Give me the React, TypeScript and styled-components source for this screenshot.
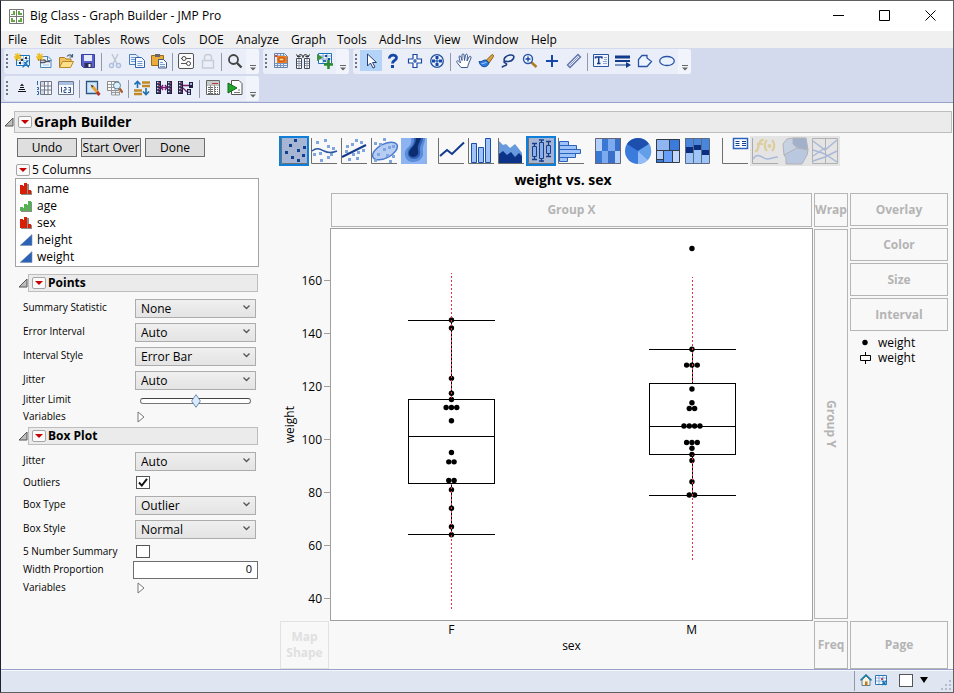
import React, { ReactNode } from "react";
import styled, { createGlobalStyle, css } from "styled-components";

const GlobalStyle = createGlobalStyle`
  *, *::before, *::after { box-sizing: border-box; }
  body {
    margin: 0;
    font-family: "Open Sans", "Noto Sans", sans-serif;
    font-size: 12px;
    line-height: 16px;
    color: #000;
  }
  button, input, select { font: inherit; color: inherit; margin: 0; }
  svg { display: block; }
`;

/* ---------- window frame ---------- */

const Window = styled.div`
  display: flex;
  flex-direction: column;
  min-height: 100vh;
  background: #f8f8f8;
  border: 1px solid #5f6063;
  border-left-color: #1f2230;
`;

const TitleBar = styled.header`
  display: flex;
  align-items: center;
  height: 30px;
  padding-left: 8px;
  gap: 6px;
  background: #fff;
`;

const WindowTitle = styled.h1`
  flex: 1;
  margin: 0;
  font-size: 12px;
  font-weight: 400;
`;

const CaptionButton = styled.button`
  display: grid;
  place-items: center;
  width: 46px;
  height: 30px;
  margin-left: -6px;
  padding: 0 0 2px;
  border: 0;
  background: transparent;
`;

const MenuBar = styled.nav`
  display: flex;
  height: 17px;
  background: #f0f0f0;
`;

const MenuItem = styled.button<{ $w: number }>`
  width: ${(p) => p.$w}px;
  padding: 0 0 0 7px;
  border: 0;
  background: transparent;
  text-align: left;
  white-space: nowrap;
  line-height: 17px;
`;

/* ---------- toolbars ---------- */

const ToolbarArea = styled.div`
  display: flex;
  flex-direction: column;
  gap: 2px;
  padding: 1px 3px 1px;
  background: #d3daed;
  border-bottom: 1px solid #98a1cb;
`;

const ToolbarRow = styled.div`
  display: flex;
  gap: 4px;
`;

const Toolbar = styled.div`
  display: flex;
  align-items: center;
  height: 25px;
  border-radius: 3px;
  background: #e9eef8;
  overflow: hidden;
`;

const Grip = styled.span`
  width: 7px;
  height: 15px;
  margin-bottom: 2px;
  background: radial-gradient(circle, #6d7482 1px, transparent 1px) 1px 0 / 4px 4px repeat-y;
`;

const Divider = styled.span`
  width: 1px;
  height: 18px;
  margin: 0 2px;
  background: #9498ac;
`;

const ToolButton = styled.button<{ $on?: boolean }>`
  display: grid;
  place-items: center;
  width: 22px;
  height: 21px;
  margin-bottom: 2px;
  padding: 0;
  border: 0;
  background: ${(p) => (p.$on ? "#b3d4f8" : "transparent")};
`;

const Overflow = styled.button`
  display: flex;
  align-items: flex-end;
  justify-content: center;
  width: 13px;
  height: 25px;
  padding: 0 0 3px;
  border: 0;
  background: #f1f5fb;
`;

/* ---------- outline headings ---------- */

const OutlineRow = styled.div<{ $main?: boolean }>`
  display: flex;
  align-items: center;
  ${(p) =>
    p.$main
      ? css`margin: 8px 1px 0 2px;`
      : css`margin: 0 1px 0 2px;`}
`;

const Disclosure = styled.button`
  display: grid;
  place-items: center;
  width: 11px;
  height: 14px;
  padding: 0;
  border: 0;
  background: transparent;
`;

const OutlineBar = styled.div<{ $main?: boolean }>`
  display: flex;
  flex: 1;
  align-items: center;
  gap: 2px;
  height: ${(p) => (p.$main ? 22 : 18)}px;
  padding-left: 3px;
  border: 1px solid #bdbdbd;
  background: #ebebeb;
`;

const HotSpotButton = styled.button`
  display: grid;
  place-items: center;
  width: 14px;
  height: 12px;
  padding: 0;
  border: 1px solid #a5a5a5;
  border-radius: 2px;
  background: #fafafa;
`;

const MainHeading = styled.h2`
  margin: 0;
  font-size: 14px;
  line-height: 18px;
  font-weight: 700;
`;

const SubHeading = styled.h3`
  margin: 0;
  font-size: 12px;
  line-height: 16px;
  font-weight: 700;
`;

/* ---------- left control panel ---------- */

const Workspace = styled.main`
  display: flex;
  flex: 1;
  align-items: flex-start;
`;

const ControlPanel = styled.aside`
  flex: none;
  width: 258px;
  padding: 5px 0 0 14px;
`;

const ButtonRow = styled.div`
  display: flex;
  gap: 4px;
  padding-left: 2px;
`;

const PushButton = styled.button`
  width: 60px;
  height: 19px;
  padding: 0;
  border: 1px solid #6e6e6e;
  background: #dfdfdf;
  line-height: 16px;
  white-space: nowrap;
`;

const ColumnsCaption = styled.div`
  display: flex;
  align-items: center;
  gap: 2px;
  height: 21px;
  padding: 4px 0 0 1px;
`;

const ColumnList = styled.ul`
  width: 244px;
  height: 89px;
  margin: 0 0 7px;
  padding: 1px 4px;
  border: 1px solid #a3a3a3;
  background: #fff;
  list-style: none;
`;

const ColumnItem = styled.li`
  display: flex;
  align-items: center;
  gap: 4px;
  height: 17px;
`;

const Fields = styled.div`
  padding: 7px 0 0 8px;
`;

const Field = styled.div<{ $h: number }>`
  display: flex;
  align-items: flex-start;
  height: ${(p) => p.$h}px;
`;

const FieldLabel = styled.label`
  width: 112px;
  flex: none;
  font-size: 10px;
  line-height: 16px;
  white-space: nowrap;
`;

const SelectWrap = styled.span`
  position: relative;
  width: 121px;
  height: 19px;
  svg { position: absolute; right: 6px; top: 6px; pointer-events: none; }
`;

const Select = styled.select`
  appearance: none;
  display: block;
  width: 100%;
  height: 19px;
  padding: 0 0 0 5px;
  border: 1px solid #acacac;
  border-radius: 0;
  background: linear-gradient(#efefef, #e4e4e4);
  line-height: 16px;
`;

const CheckBox = styled.input`
  appearance: none;
  width: 14px;
  height: 13px;
  margin: 2px 0 0 1px;
  border: 1px solid #555;
  background: #fff;
  &:checked {
    background: #fff
      url("data:image/svg+xml,%3Csvg xmlns='http://www.w3.org/2000/svg' viewBox='0 0 12 11'%3E%3Cpath d='M2 5.5 4.8 8.6 10 1.8' fill='none' stroke='%23111' stroke-width='1.9'/%3E%3C/svg%3E")
      center / 12px 11px no-repeat;
  }
`;

const Slider = styled.input`
  appearance: none;
  width: 111px;
  height: 14px;
  margin: 3px 0 0 5px;
  background: transparent;
  &::-webkit-slider-runnable-track {
    height: 6px;
    border: 1px solid #777;
    border-top-color: #444;
    border-radius: 3px;
    background: #fff;
  }
  &::-webkit-slider-thumb {
    appearance: none;
    width: 10px;
    height: 14px;
    margin-top: -5px;
    background: url("data:image/svg+xml,%3Csvg xmlns='http://www.w3.org/2000/svg' viewBox='0 0 10 14'%3E%3Cpath d='M5 .7 9.4 7 5 13.3.6 7Z' fill='%23dcebfb' stroke='%236a8db5'/%3E%3C/svg%3E")
      center / 10px 14px no-repeat;
  }
`;

const NumberBox = styled.input`
  width: 125px;
  height: 18px;
  margin-left: -2px;
  padding: 0 5px 3px 0;
  border: 1px solid #6e6e6e;
  background: #fff;
  font-size: 11px;
  text-align: right;
`;

const ExpandButton = styled.button`
  display: grid;
  place-items: center;
  width: 9px;
  height: 14px;
  margin: 2px 0 0 1px;
  padding: 0;
  border: 0;
  background: transparent;
`;

/* ---------- graph area ---------- */

const GraphPanel = styled.section`
  flex: 1;
  min-width: 0;
  padding: 3px 5px 0 20px;
`;

const ElementBar = styled.div`
  display: flex;
  gap: 7px;
`;

const ElementGroup = styled.div`
  display: flex;
`;

const ElementButton = styled.button<{ $on?: boolean }>`
  display: grid;
  place-items: center;
  width: 30px;
  height: 30px;
  padding: 0;
  border: 0;
  box-shadow: ${(p) => (p.$on ? "inset 0 0 0 2px #0f7fda" : "none")};
  background: ${(p) => (p.$on ? "#a7b5d4" : "transparent")};
  &:disabled { background: #e4e4e4; }
  &:disabled svg { opacity: 0.35; }
`;

const GraphTitle = styled.h2`
  margin: 4px 101px 4px 0;
  font-size: 14px;
  line-height: 19px;
  font-weight: 700;
  text-align: center;
`;

const GraphGrid = styled.div`
  display: grid;
  grid-template-columns: 49px minmax(240px, 1fr) 34px 98px;
  grid-template-rows: 35px 393px 48px;
  column-gap: 2px;
  padding-left: 1px;
`;

const zoneHeights = { group: "34px", role: "33px", fill: "auto" };

const DropZone = styled.div<{ $size?: keyof typeof zoneHeights; $col?: number; $faint?: boolean; $vertical?: boolean }>`
  display: grid;
  place-items: center;
  text-align: center;
  height: ${(p) => zoneHeights[p.$size ?? "fill"]};
  ${(p) => p.$col && css`grid-column: ${p.$col};`}
  border: 1px solid ${(p) => (p.$faint ? "#e2e2e2" : "#b5b5b5")};
  color: ${(p) => (p.$faint ? "#e0e0e0" : "#b4b4b4")};
  font-weight: 700;
  ${(p) =>
    p.$vertical &&
    css`
      writing-mode: vertical-rl;
      margin: 1px 0 2px;
    `}
`;

const RoleColumn = styled.div`
  grid-column: 4;
  grid-row: 1 / 3;
  display: flex;
  flex-direction: column;
  gap: 2px;
`;

const Legend = styled.ul`
  margin: 2px 0 0;
  padding: 0 0 0 9px;
  list-style: none;
  line-height: 15px;
`;

const LegendItem = styled.li`
  display: flex;
  align-items: center;
  gap: 6px;
  height: 15px;
`;

const YAxis = styled.div`
  display: grid;
  grid-template-columns: 18px 1fr;
  align-items: center;
`;

const YTitle = styled.span`
  writing-mode: vertical-rl;
  transform: rotate(180deg);
  justify-self: end;
`;

const AxisSvg = styled.svg`
  width: 100%;
  height: 393px;
  overflow: visible;
  font-size: 12px;
`;

const PlotFrame = styled.div`
  height: 393px;
  margin: 0 -1px;
  border: 1px solid #a0a0a0;
  background: #fff;
`;

const PlotSvg = styled.svg`
  width: 100%;
  height: 391px;
`;

const XAxis = styled.div`
  display: grid;
  grid-template-columns: 1fr 1fr;
  grid-template-rows: 16px 16px;
  justify-items: center;
  padding-top: 1px;
`;

const XTitle = styled.span`
  grid-column: 1 / 3;
`;

/* ---------- status bar ---------- */

const StatusBar = styled.footer`
  display: flex;
  align-items: center;
  justify-content: flex-end;
  height: 23px;
  border-top: 1px solid #98a1cb;
  background: #e0e6f1;
  box-shadow: inset 0 1px #f6f8fc;
`;

const StatusTools = styled.div`
  display: flex;
  align-items: center;
  height: 20px;
  padding-left: 3px;
  border-left: 1px solid #9498ac;
`;

const StatusButton = styled.button<{ $w: number }>`
  display: grid;
  place-items: center;
  width: ${(p) => p.$w}px;
  height: 18px;
  padding: 0 0 2px;
  border: 0;
  background: transparent;
`;

const StatusCheck = styled(CheckBox)`
  margin: 0 2px 1px 10px;
`;

/* ---------- icons ---------- */

const Icon = ({ size = 16, children }: { size?: number; children: ReactNode }) => (
  <svg width={size} height={size} viewBox={`0 0 ${size} ${size}`} fill="none" aria-hidden="true">
    {children}
  </svg>
);

const spark = <path d="M3.500 0v8M0 4h7.500M1 1l6 6M6.500 1 1 6.500" stroke="#eebc22" strokeWidth="1.400" />;

const icons: Record<string, ReactNode> = {
  newTable: (
    <Icon>
      <path d="M2.500 2.500h13v10h-13z" fill="#fff" stroke="#1b75bb" />
      <path d="M3 5.500h12M3 7.500h12M3 10h12M6.500 3v9M9.500 3v9M12.500 3v9" stroke="#a9c8e4" />
      <path d="M7 6h2v2H7zM11 4h2v2h-2zM5 9h2v2H5z" fill="#203050" />
      <path d="M8.500 14c3 0 2-6 6-6M10 9.500c2-1 3 4 5 4.500" stroke="#1b75bb" strokeWidth="1.500" />
      {spark}
    </Icon>
  ),
  newScript: (
    <Icon>
      <path d="M4.500 3.500h7.500l3 3v8H4.500z" fill="#eef5fd" stroke="#4c86b8" />
      <path d="M11.500 3.500v4h4" stroke="#4c86b8" />
      <path d="M2 7h6c2 0 2 2.500 0 2.500H4M9 8.500h5" stroke="#556" strokeWidth="1.500" />
      <path d="M7 12h6" stroke="#a9c4e4" />
      {spark}
    </Icon>
  ),
  open: (
    <Icon>
      <path d="M1.500 14.500V4.500h5L8 6h5v3" fill="#f0c461" stroke="#a97a22" />
      <path d="m1.500 14.500 3-6h11l-3 6z" fill="#ffe08a" stroke="#b98828" />
      <path d="M9 3.500c2-2.500 4-2 5 0m.5-2.500v3h-3" stroke="#44617e" strokeWidth="1.200" />
    </Icon>
  ),
  save: (
    <Icon>
      <path d="M1.500 1.500h13v13h-11l-2-2z" fill="#5860d0" stroke="#383f96" />
      <path d="M4 2h8v6H4z" fill="#e6ebfb" />
      <path d="M4.500 10h7v4.500h-7z" fill="#2b2d55" />
      <path d="M8.500 11h2v3h-2z" fill="#fff" />
    </Icon>
  ),
  cut: (
    <Icon>
      <path d="m5 1 5 10M11 1 6 11" stroke="#bfc5d2" strokeWidth="1.500" />
      <circle cx="4.500" cy="12.500" r="2" stroke="#aebee0" strokeWidth="1.500" />
      <circle cx="11.500" cy="12.500" r="2" stroke="#aebee0" strokeWidth="1.500" />
    </Icon>
  ),
  copy: (
    <Icon>
      <path d="M.5 1.500h6.500l2.500 2.500v7.500h-9z" fill="#eaf2fd" stroke="#4c7cba" />
      <path d="M6.500 4.500h6l3 3v7h-9z" fill="#f6faff" stroke="#2f62a8" />
      <path d="M2 4.500h4M2 6.500h4M2 8.500h4M8.500 8.500h5M8.500 10.500h5M8.500 12.500h5" stroke="#6f98cf" />
    </Icon>
  ),
  paste: (
    <Icon>
      <path d="M.5 2.500h12v10H.5z" fill="#e8ad3a" stroke="#9d6b16" />
      <path d="M4 1h5v3H4z" fill="#666" />
      <path d="M7.500 6.500h5l3 3v5.500h-8z" fill="#f3f8ff" stroke="#3f5780" />
      <path d="M9 9.500h3M9 11.500h5M9 13.500h5" stroke="#7aa0d2" />
    </Icon>
  ),
  prefs: (
    <Icon>
      <rect x="0.500" y="0.500" width="15" height="15" rx="1.500" fill="#fafafa" stroke="#555" />
      <path d="M3 5.500h10M3 10.500h10" stroke="#555" />
      <circle cx="6" cy="5.500" r="2" fill="#fff" stroke="#444" />
      <circle cx="10.500" cy="10.500" r="2" fill="#fff" stroke="#444" />
    </Icon>
  ),
  lock: (
    <Icon>
      <path d="M2.500 7.500h11v7.500h-11zM4.500 7V4.500c0-4 7-4 7 0V7" stroke="#c8ccd6" strokeWidth="1.500" />
    </Icon>
  ),
  search: (
    <Icon>
      <circle cx="6.500" cy="6.500" r="4.500" stroke="#444" strokeWidth="1.800" />
      <path d="m10 10 4.500 4.500" stroke="#444" strokeWidth="2.400" />
    </Icon>
  ),
  tableBox: (
    <Icon>
      <path d="M1.500.5h10l3 3v11h-13z" fill="#e7effa" stroke="#6a83ab" />
      <path d="M2 3h10M2 10.500h12M2 12.500h12M4.500 1v13M7.500 1v13M10.500 1v13" stroke="#7494c4" />
      <path d="M4 3h10v7H4z" fill="#ef7a1c" />
      <path d="M6 5h5v3H6z" fill="#ffd08a" stroke="#b84805" />
      <path d="M2 2h2v2H2z" fill="#d64c2b" />
    </Icon>
  ),
  joinTables: (
    <Icon>
      <path d="M1.500 5.500h5v10h-5zM9.500 5.500h5v10h-5z" fill="#fff" stroke="#444a55" />
      <path d="M2 8.500h4M2 10.500h4M2 12.500h4M10 8.500h4M10 10.500h4M10 12.500h4M4 6v9M12 6v9" stroke="#8c98ae" />
      <path d="M8 4.500C8 1 4 1 3 3.500M8 4.500C8 1 12 1 13 3.500M1.500 1.500 3 4l2.500-.5M14.500 1.500 13 4l-2.500-.5" stroke="#111" />
    </Icon>
  ),
  addTable: (
    <Icon>
      <path d="M1.500.5h13v10h-13z" fill="#fff" stroke="#1b75bb" />
      <path d="M2 3h12M2 6h12M6 1v9M10 1v9" stroke="#7ea8d2" />
      <path d="M8 2h2v2H8zM11 5h2v2h-2z" fill="#1b4b96" />
      <path d="M6 8h3" stroke="#1b75bb" strokeWidth="2" />
      <path d="m0 1 6 3.500L0 8z" fill="#3f8f3c" />
      <path d="M11.500 7v9M7 11.500h9" stroke="#2d8a2e" strokeWidth="2.600" />
    </Icon>
  ),
  arrow: (
    <Icon>
      <path d="M4.500 1v12l3-3 2.500 5 2-1-2.500-4.500h4z" fill="#fff" stroke="#2b3f78" />
    </Icon>
  ),
  help: (
    <Icon>
      <path d="M4.500 5.500C4 1 12 1 11.500 5c0 2.500-4 2-4 5.500" stroke="#1747a6" strokeWidth="2.800" />
      <path d="M6 12h3v3H6z" fill="#1747a6" />
    </Icon>
  ),
  plusBox: (
    <Icon>
      <path d="M6 1.500h4V6h4.500v4H10v4.500H6V10H1.500V6H6z" fill="#fff" stroke="#1747a6" strokeWidth="1.200" />
      <path d="M8 6v4M6 8h4" stroke="#1747a6" strokeWidth="1.200" />
    </Icon>
  ),
  target: (
    <Icon>
      <circle cx="8" cy="8" r="6.300" fill="#eef4ff" stroke="#22509f" strokeWidth="1.300" />
      <path d="M8 3v3M8 10v3M3 8h3M10 8h3" stroke="#1747a6" strokeWidth="3" />
      <path d="M8 6v4M6 8h4" stroke="#1747a6" />
    </Icon>
  ),
  hand: (
    <Icon>
      <path d="M5 14.500 1 9.500c-1-1.500.5-2.500 2-1L4.500 10 3 4c0-1.500 1.500-1.500 2 0l1 3.500L6 2c0-1.500 2-1.500 2 0l.5 5.500L9.500 2c.5-1.500 2-1 2 .5L11 8l2-4c1-1.500 2.500-.5 2 1l-2.500 6-1 3.500z" fill="#fff" stroke="#3c5a94" />
    </Icon>
  ),
  brush: (
    <Icon>
      <path d="m8.500 7 5-5c1-1 2.500 0 2 1.500L11 10z" fill="#d9a544" stroke="#8a5d17" />
      <path d="M1 8.500c3 1 4-2 7-1.500l3 3C9.500 15 2.500 15.500 1 8.500z" fill="#2e7be0" stroke="#164a9e" />
      <path d="M3.500 10.500c2 .5 3-1 5-1" stroke="#a9cdf8" />
    </Icon>
  ),
  lasso: (
    <Icon>
      <path d="M5 8.500C2 6 7 1.500 11.500 2 16 2.500 13.500 8.500 8 8.500c-2 0-4-1-4 .5s3 .5 2.500 2.500S3.500 12 2 14.500" stroke="#1d3f86" strokeWidth="1.600" />
    </Icon>
  ),
  magnify: (
    <Icon>
      <path d="m9 9 5.500 5" stroke="#b07b28" strokeWidth="2.600" />
      <circle cx="6" cy="6" r="4.500" fill="#eef5ff" stroke="#2a55a5" strokeWidth="1.400" />
      <path d="M6 3.500v5M3.500 6h5" stroke="#1747a6" strokeWidth="1.400" />
    </Icon>
  ),
  cross: (
    <Icon>
      <path d="M8 2v12M2 8h12" stroke="#1747a6" strokeWidth="2" />
    </Icon>
  ),
  ruler: (
    <Icon>
      <path d="M1.500 12 12 1.500 14.500 4 4 14.500z" fill="#f2f3fb" stroke="#5d6fae" strokeWidth="1.300" />
      <path d="M3.500 12.500 12.500 3.500" stroke="#8f9ccc" />
    </Icon>
  ),
  textBox: (
    <Icon>
      <path d="M.5 1.500h15v12H.5z" fill="#f2f6fc" stroke="#2a55a5" />
      <path d="M2.500 4h6.500M2.500 3.500v2M9 3.500v2M5.700 4v6M4 10.500h3.500" stroke="#123a8c" strokeWidth="1.500" />
      <path d="M11 4.500h3M11 6.500h3M10 8.500h4M10 10.500h4" stroke="#8fa9d6" />
    </Icon>
  ),
  lines: (
    <Icon>
      <path d="M0 4h15" stroke="#123a8c" strokeWidth="3" />
      <path d="M0 8h15" stroke="#123a8c" strokeWidth="2" />
      <path d="M0 12h12" stroke="#123a8c" />
      <path d="m11 9 5 3-5 3z" fill="#123a8c" />
    </Icon>
  ),
  polygon: (
    <Icon>
      <path d="M1.500 13.500V6.500L5 2.500h5V5l4.500 3.500L10 13.500z" fill="#eef4ff" stroke="#2a55a5" strokeWidth="1.300" />
    </Icon>
  ),
  ellipse: (
    <Icon>
      <ellipse cx="8" cy="8" rx="7.300" ry="4.500" fill="#eaf2fd" stroke="#2a55a5" strokeWidth="1.300" />
    </Icon>
  ),
  sortUp: (
    <Icon>
      <path d="M7 5.500h2M6 7.500h4M5 9.500h6M4 11.500h8" stroke="#111" strokeWidth="1.200" />
      <path d="M6 6 8 3.500 10 6z" fill="#222" />
    </Icon>
  ),
  colInfo: (
    <Icon>
      <path d="M4.500 1.500h11v13h-11zM4.500 6h11M4.500 10h11M8.500 1.500v13M12 1.500v13" fill="#f7f9fc" stroke="#6e7787" />
      <path d="M5 2h3v3H5zM5 11h3v3H5z" fill="#cfd8e6" />
      <path d="M1.500 1v4M1 7.500h1.500v2H1M1 11.500h1.500v3H1" stroke="#2d66ad" />
    </Icon>
  ),
  numbers: (
    <Icon>
      <path d="M.5 1.500h15v13H.5z" fill="#f7f9fc" stroke="#6e7787" />
      <path d="M1 2h14v3H1z" fill="#a8bfe2" />
      <path d="M3.500 7v5.500M6 7.500h2V10H6v2.500h2.500M10.500 7.500h2v5h-2.500M10.500 10h2" stroke="#33538c" />
    </Icon>
  ),
  editPage: (
    <Icon>
      <path d="M1.500 1.500h11v12h-11z" fill="#cfe6fb" stroke="#2f5680" strokeWidth="1.300" />
      <path d="m7 6 6 7" stroke="#e8a032" strokeWidth="3" />
      <path d="m12 12 2.500 3" stroke="#b6322b" strokeWidth="3" />
      <path d="M5.500 4.500 8.500 6 7 7.500z" fill="#333" />
    </Icon>
  ),
  searchTable: (
    <Icon>
      <path d="M.5 1.500h11v9H.5z" fill="#fff" stroke="#8b8b8b" />
      <path d="M1 4.500h10M1 7.500h10M4.500 2v9M8 2v9M4.500 12.500h8M4.500 15h8M4.500 11v4M8.500 11v4M12.500 11v4" stroke="#999" />
      <circle cx="10" cy="5.500" r="3.500" fill="#dbeefb" stroke="#5d7f9b" />
      <path d="m12.500 8.500 3 4" stroke="#a85b1e" strokeWidth="2.200" />
    </Icon>
  ),
  sortRows: (
    <Icon>
      <path d="M8 2.500h8M8 6h8M0 10.500h8M0 14h8" stroke="#c08a28" strokeWidth="2.400" />
      <path d="M3.500 8V2M.5 4.500l3-3 3 3M12 8v6M9 11.500l3 3 3-3" stroke="#1f6fae" strokeWidth="1.600" />
    </Icon>
  ),
  joinCols: (
    <Icon>
      <path d="M0 1h5v13H0zM11 1h5v13h-5z" fill="#1c2148" />
      <path d="M1 2.500h1.500M1 5.500h1.500M1 8.500h1.500M1 11.500h1.500M12 2.500h1.500M12 5.500h1.500M12 8.500h1.500M12 11.500h1.500" stroke="#d8def2" strokeWidth="1.500" />
      <path d="M3.500 2.500v10M14.500 2.500v10" stroke="#c93c5c" strokeDasharray="1.500 1.500" />
      <path d="M5 7.500h6M9 5l2 2.500L9 10M7 5 5 7.500 7 10" stroke="#7a1d72" strokeWidth="1.300" />
    </Icon>
  ),
  splitCols: (
    <Icon>
      <path d="M0 1h5v13H0zM11 2h4v6h-4zM9 9h4v6H9z" fill="#1c2148" />
      <path d="M1 2.500h1.500M1 5.500h1.500M1 8.500h1.500M1 11.500h1.500M12 4h2M10 11h2M10 13.500h2" stroke="#d8def2" strokeWidth="1.500" />
      <path d="M3.500 2.500v10" stroke="#c93c5c" strokeDasharray="1.500 1.500" />
      <path d="M5 5.500h6M5 8l4 4" stroke="#7a1d72" strokeWidth="1.300" />
    </Icon>
  ),
  summary: (
    <Icon>
      <path d="M1.500.5h13v14h-13z" fill="#fff" stroke="#666" />
      <path d="M2 1h12v3H2z" fill="#c9c9c9" />
      <path d="M3 7.500h10M3 9.500h10M3 11.500h10M3 13.500h10" stroke="#666" strokeDasharray="2 1" />
      <path d="M7 3.500h6" stroke="#b43b3b" />
      <path d="M5.500 5v9M9.500 5v9M2 5h12" stroke="#888" />
    </Icon>
  ),
  run: (
    <Icon>
      <path d="M4.500.5h7.500l3 3v11H4.500z" fill="#fff" stroke="#555" />
      <path d="M7 12.500h6M11 10h2" stroke="#777" />
      <path d="m1 3 9 5-9 5z" fill="#22a52c" stroke="#136b1a" />
    </Icon>
  ),
};

const AppLogo = () => (
  <svg width="15" height="15" viewBox="0 0 15 15" aria-hidden="true">
    <path d="M.5.5h14v14H.5z" fill="#fff" stroke="#777" />
    <path d="M7.500 0v15M0 7.500h15" stroke="#777" />
    <path d="M2 5h2V2h2v4H2zM9 2h2v2h2v2H9zM2 9h2v2h2v2H2zM9 11h2V9h2v4H9z" fill="#62a844" />
  </svg>
);

const axes = <path d="M2.500 2v25.500H28" stroke="#6f6f6f" />;
const Glyph = ({ children }: { children: ReactNode }) => (
  <svg width="30" height="30" viewBox="0 0 30 30" fill="none" aria-hidden="true">
    {children}
  </svg>
);
const Dots = ({ at, fill = "#7fa5df" }: { at: number[][]; fill?: string }) => (
  <>
    {at.map(([x, y]) => (
      <rect key={`${x}-${y}`} x={x} y={y} width="3" height="3" fill={fill} />
    ))}
  </>
);

type ElementDef = { name: string; glyph: ReactNode; on?: boolean; off?: boolean };

const elementGroups: ElementDef[][] = [
  [
    { name: "Points", on: true, glyph: <Glyph>{axes}<Dots fill="#12408f" at={[[15, 3], [10, 8], [24, 10], [6, 15], [18, 13], [23, 18], [12, 20], [18, 23]]} /></Glyph> },
    { name: "Smoother", glyph: <Glyph>{axes}<Dots at={[[7, 5], [15, 3], [18, 9], [23, 11], [4, 17], [10, 16], [21, 17], [18, 20], [11, 23]]} /><path d="M3 15c5-4 8-2 12 0s8 2 13 0" stroke="#2b57a4" strokeWidth="1.500" /></Glyph> },
    { name: "Line of Fit", glyph: <Glyph>{axes}<Dots at={[[16, 3], [12, 7], [21, 5], [7, 9], [6, 14], [23, 13], [18, 15], [13, 17], [9, 22], [17, 21]]} /><path d="M3 21 27 9" stroke="#123a8c" strokeWidth="2" /></Glyph> },
    { name: "Ellipse", glyph: <Glyph>{axes}<ellipse cx="16" cy="15" rx="13.500" ry="7" transform="rotate(-28 16 15)" fill="#b7cdf3" stroke="#4a7bd0" strokeWidth="1.500" /><Dots at={[[14, 2], [5, 6], [10, 7], [23, 9], [14, 12], [19, 10], [8, 17], [17, 18], [23, 19], [5, 23], [20, 24]]} /></Glyph> },
    { name: "Contour", glyph: <Glyph><path d="M2 2h26v26H2z" fill="#8db4f1" /><path d="M12 2h14c0 6-3 8-2 14s-4 10-10 10S5 21 6 16s8-6 6-14z" fill="#5a8cd9" /><path d="M15 2h9c0 5-4 7-3 13 1 5-2 8-6 8s-7-3-6-7c1-5 7-6 6-14z" fill="#2f5fb4" /><path d="M17 2h5c-1 4-4 7-3 12 1 4-1 7-5 7s-5-4-3-7c2-3 6-5 6-12z" fill="#0d2c70" /></Glyph> },
  ],
  [
    { name: "Line", glyph: <Glyph>{axes}<path d="m4 20 7-6 5 4L28 6.500" stroke="#123a8c" strokeWidth="2" /></Glyph> },
    { name: "Bar", glyph: <Glyph>{axes}<path d="M5.500 7.500h5v19h-5zM12.500 11.500h5v15h-5zM19.500 2.500h5v24h-5z" fill="#9dc3f8" stroke="#1d4fa8" /></Glyph> },
    { name: "Area", glyph: <Glyph><path d="M3 27V5l4 4 3-1 4 4 5-4 4 5 3 4v10z" fill="#6699dd" /><path d="M3 27v-9l4-3 4 4 4-3 4 5 4-4 3 3v7z" fill="#0b3388" />{axes}</Glyph> },
    { name: "Box Plot", on: true, glyph: <Glyph>{axes}<path d="M8.500 7v16M6 7.500h5M6 23.500h5M15.500 4v22M13 4h5M13 25h5M22.500 5v16M20 5.500h5M20 20.500h5" stroke="#12408f" strokeWidth="1.300" /><path d="M6.500 10.500h4v10h-4zM13.500 6.500h4v16h-4zM20.500 9.500h4v8h-4z" fill="#88aeea" stroke="#12408f" /></Glyph> },
    { name: "Histogram", glyph: <Glyph><path d="M3.500 5.500h9v4h-9zM3.500 9.500h17v4h-17zM3.500 13.500h21v4h-21zM3.500 17.500h16v4h-16zM3.500 21.500h8v4h-8z" fill="#9dc3f8" stroke="#2a62bd" />{axes}</Glyph> },
  ],
  [
    { name: "Heatmap", glyph: <Glyph><path d="M2 2h26v26H2z" fill="#7da9ee" /><path d="M2 2h7v13H2zM22 15h6v13h-6z" fill="#b3cffb" /><path d="M9 2h6v13H9zM2 15h7v13H2z" fill="#3a78d6" /><path d="M22 2h6v13h-6zM15 15h7v13h-7z" fill="#386fc9" /><path d="M2.500 2.500h25v25h-25z" stroke="#667" /></Glyph> },
    { name: "Pie", glyph: <Glyph><circle cx="15" cy="15" r="13" fill="#3a7bdb" /><path d="M15 15 4 8a13 13 0 0 1 22 0z" fill="#1d50ae" /><path d="m15 15 11-7a13 13 0 0 1-1 16z" fill="#619fe8" /><path d="m15 15 10 9a13 13 0 0 1-10 4z" fill="#93bcf8" /></Glyph> },
    { name: "Treemap", glyph: <Glyph><path d="M3 3h14v11H3z" fill="#8fb6f2" /><path d="M17 3h10v11H17z" fill="#3a7bdb" /><path d="M3 14h7v9H3z" fill="#b0cdfa" /><path d="M3 23h7v4H3z" fill="#3a7bdb" /><path d="M10 14h9v13h-9z" fill="#679ff8" /><path d="M19 14h8v13h-8z" fill="#c0d7fb" /><path d="M3.500 3.500h23v23h-23zM16.500 3v11M3 14.500h24M10.500 14v13M19.500 14v13M3 23.500h7" stroke="#333a48" /></Glyph> },
    { name: "Mosaic", glyph: <Glyph><path d="M2 2h24v26H2z" fill="#9fc4f8" /><path d="M2 2h24v9H2z" fill="#4a86dc" /><path d="M2 11h8v6H2zM10 9h8v5h-8zM18 14h8v5h-8z" fill="#0b2f80" /><path d="M18 10h8v4h-8z" fill="#4a86dc" /><path d="M2.500 2.500h24v25h-24zM10.500 2v26M18.500 2v26" stroke="#5c6b85" /></Glyph> },
  ],
  [
    { name: "Caption Box", glyph: <Glyph>{axes}<path d="M13.500 2.500h14v10h-14z" fill="#fff" stroke="#2a62bd" strokeWidth="1.500" /><path d="M15.500 5.500h4M15.500 7.500h4M15.500 9.500h4M22 5.500h4M22 7.500h4M22 9.500h4" stroke="#12408f" /></Glyph> },
    { name: "Formula", off: true, glyph: <Glyph><path d="M2.500 2v25.500H28" stroke="#444" /><path d="M5 15c3 1 3-4 4-7s2-5 5-4M7 8h6M17 4c-3 3-3 8 0 11M22 4c3 3 3 8 0 11" stroke="#d0a514" strokeWidth="2.200" /><circle cx="19.500" cy="10" r="2" fill="#d0a514" /><path d="M3 23c5-8 10 0 14 0s7-2 11-2" stroke="#3d6cc0" strokeWidth="1.500" /></Glyph> },
    { name: "Map Shapes", off: true, glyph: <Glyph><path d="M3 8 7 3h6l4 9-13 8z" fill="#8fb0e0" /><path d="M13 2h13l2 12-10-2-5-4z" fill="#2a529c" /><path d="m4 19 13-7 11 2-1 5-5 9H6v-6z" fill="#6f97d6" /><path d="M3 8 7 3l6-1h13l2 12-1 5-5 9H6v-6l-2-3zM13 2v6l4 4-13 7M17 12l11 2" stroke="#556" /></Glyph> },
    { name: "Parallel", off: true, glyph: <Glyph><path d="M2.500 2.500h25v25h-25zM15.500 2v26" stroke="#555" /><path d="m3 5 12 9 12-10M3 14l12 4 12 8M3 25l12-4 12-6M3 20l12-8" stroke="#3d6cc0" strokeWidth="1.500" /></Glyph> },
  ],
];

/* ---------- data ---------- */

const menus: [string, number][] = [
  ["File", 32], ["Edit", 34], ["Tables", 46], ["Rows", 42], ["Cols", 37], ["DOE", 37], ["Analyze", 55],
  ["Graph", 46], ["Tools", 42], ["Add-Ins", 55], ["View", 39], ["Window", 58], ["Help", 40],
];

const toolbarRows: string[][][][] = [
  [
    [["newTable", "newScript", "open", "save"], ["cut", "copy", "paste"], ["prefs", "lock"], ["search"]],
    [["tableBox", "joinTables", "addTable"]],
    [["arrow", "help", "plusBox", "target"], ["hand", "brush", "lasso", "magnify", "cross", "ruler"], ["textBox", "lines", "polygon", "ellipse"]],
  ],
  [[["sortUp", "colInfo", "numbers"], ["editPage", "searchTable"], ["sortRows", "joinCols", "splitCols"], ["summary", "run"]]],
];

type ColumnKind = "nominal" | "ordinal" | "continuous";
const columns: [string, ColumnKind][] = [
  ["name", "nominal"], ["age", "ordinal"], ["sex", "nominal"], ["height", "continuous"], ["weight", "continuous"],
];

type BoxGroup = {
  at: string;
  q1: number; median: number; q3: number; low: number; high: number;
  range: [number, number];
  points: [number, number][];
};

const groups: BoxGroup[] = [
  {
    at: "25%", q1: 83.5, median: 101, q3: 115, low: 64, high: 145, range: [35.5, 163],
    points: [[145, 1], [142, 1], [123, 1], [117.4, 1], [115, 1], [112, 3], [107, 1], [95, 1], [91.5, 2], [84.5, 2], [81, 1], [74, 1], [67, 1], [64, 1]],
  },
  {
    at: "75%", q1: 94.3, median: 105, q3: 121.2, low: 79, high: 134, range: [54, 161.5],
    points: [[172, 1], [134, 1], [128, 3], [119, 1], [113.8, 1], [111.6, 2], [105, 4], [98.8, 3], [96.6, 1], [94.3, 1], [92, 1], [84, 1], [79, 2]],
  },
];

const ticks = [160, 140, 120, 100, 80, 60, 40];
const toY = (value: number) => 52 + (160 - value) * 2.65;
const snap = (value: number) => Math.round(toY(value)) - 0.5;

/* ---------- pieces ---------- */

const HotSpot = ({ label }: { label: string }) => (
  <HotSpotButton aria-label={label}>
    <svg width="8" height="4" viewBox="0 0 8 4"><path d="M0 0h8L4 4z" fill="#c80000" /></svg>
  </HotSpotButton>
);

const OutlineToggle = ({ label }: { label: string }) => (
  <Disclosure aria-label={label} aria-expanded="true">
    <svg width="10" height="10" viewBox="0 0 10 10"><path d="M9 1v8H1z" fill="#bdbdbd" stroke="#555" /></svg>
  </Disclosure>
);

const Section = ({ title }: { title: string }) => (
  <OutlineRow>
    <OutlineToggle label={`Collapse ${title}`} />
    <OutlineBar>
      <HotSpot label={`${title} menu`} />
      <SubHeading>{title}</SubHeading>
    </OutlineBar>
  </OutlineRow>
);

const SelectField = ({ id, label, value, h = 24 }: { id: string; label: string; value: string; h?: number }) => (
  <Field $h={h}>
    <FieldLabel htmlFor={id}>{label}</FieldLabel>
    <SelectWrap>
      <Select id={id} defaultValue={value}>
        <option>{value}</option>
      </Select>
      <svg width="7" height="5" viewBox="0 0 7 5"><path d="m.5.5 3 3 3-3" fill="none" stroke="#555" strokeWidth="1.300" /></svg>
    </SelectWrap>
  </Field>
);

const VariablesField = ({ id, h }: { id: string; h: number }) => (
  <Field $h={h}>
    <FieldLabel htmlFor={id}>Variables</FieldLabel>
    <ExpandButton id={id} aria-expanded="false">
      <svg width="8" height="12" viewBox="0 0 8 12"><path d="M1 1v10l6-5z" fill="#fff" stroke="#777" /></svg>
    </ExpandButton>
  </Field>
);

const ColumnIcon = ({ kind }: { kind: ColumnKind }) => (
  <svg width="13" height="12" viewBox="0 0 13 12" aria-hidden="true">
    {kind === "nominal" && (
      <>
        <path d="M1 3h4v9H1zM5 1h4v11H5zM9 8h3v4H9z" fill="#8b8b8b" />
        <path d="M0 2h3v9H0zM4 0h3v11H4zM8 7h3v4H8z" fill="#d81e05" />
        <path d="M3 3h1v8H3z" fill="#d81e05" />
      </>
    )}
    {kind === "ordinal" && (
      <>
        <path d="M1 8h4v4H1zM5 5h4v7H5zM9 2h3v10H9z" fill="#8b8b8b" />
        <path d="M0 7h3v4H0zM4 4h3v7H4zM8 1h3v10H8z" fill="#4cb84c" />
      </>
    )}
    {kind === "continuous" && <path d="M12 .5v11H0z" fill="#2a63b5" stroke="#7f8fa8" strokeWidth=".6" />}
  </svg>
);

const BoxWithPoints = ({ g }: { g: BoxGroup }) => (
  <svg x={g.at} overflow="visible">
    <g stroke="#000" fill="none">
      <path
        shapeRendering="crispEdges"
        d={`M-43 ${snap(g.high)}h87M-43 ${snap(g.low)}h87M.5 ${snap(g.high)}V${snap(g.q3)}M.5 ${snap(g.q1)}V${snap(g.low)}M-42.500 ${snap(g.q3)}h86V${snap(g.q1)}h-86zM-42.500 ${snap(g.median)}h86`}
      />
    </g>
    {g.points.flatMap(([value, count]) =>
      Array.from({ length: count }, (_, i) => (
        <circle key={`${value}-${i}`} cx={(i - (count - 1) / 2) * 5.33 + 0.2} cy={toY(value) - 0.7} r="2.700" fill="#000" />
      )),
    )}
    <path
      shapeRendering="crispEdges"
      d={`M.5 ${snap(g.range[1])}V${snap(g.q3)}M.5 ${snap(g.q1)}V${snap(g.range[0])}`}
      stroke="#e8304a"
      strokeDasharray="2 2"
      strokeDashoffset="0.5"
    />
  </svg>
);

export default function App() {
  return (
    <>
      <GlobalStyle />
      <Window>
        <TitleBar>
          <AppLogo />
          <WindowTitle>Big Class - Graph Builder - JMP Pro</WindowTitle>
          <CaptionButton aria-label="Minimize"><svg width="11" height="11"><path d="M0 5.500h11" stroke="#000" /></svg></CaptionButton>
          <CaptionButton aria-label="Maximize"><svg width="11" height="11"><path d="M.5.5h10v10H.5z" fill="none" stroke="#000" /></svg></CaptionButton>
          <CaptionButton aria-label="Close"><svg width="11" height="11"><path d="m.5.5 10 10m0-10-10 10" stroke="#000" /></svg></CaptionButton>
        </TitleBar>

        <MenuBar aria-label="Main menu">
          {menus.map(([name, w]) => (
            <MenuItem key={name} $w={w}>{name}</MenuItem>
          ))}
        </MenuBar>

        <ToolbarArea>
          {toolbarRows.map((bars, r) => (
            <ToolbarRow key={r}>
              {bars.map((sets, b) => (
                <Toolbar key={b} role="toolbar">
                  <Grip />
                  {sets.map((names, s) => (
                    <React.Fragment key={s}>
                      {s > 0 && <Divider />}
                      {names.map((name) => (
                        <ToolButton key={name} aria-label={name} $on={name === "arrow"}>{icons[name]}</ToolButton>
                      ))}
                    </React.Fragment>
                  ))}
                  <Overflow aria-label="More tools">
                    <svg width="6" height="6" viewBox="0 0 6 6"><path d="M0 .5h6" stroke="#666" /><path d="M0 2.500h6L3 5.500z" fill="#666" /></svg>
                  </Overflow>
                </Toolbar>
              ))}
            </ToolbarRow>
          ))}
        </ToolbarArea>

        <OutlineRow $main>
          <OutlineToggle label="Collapse Graph Builder" />
          <OutlineBar $main>
            <HotSpot label="Graph Builder menu" />
            <MainHeading>Graph Builder</MainHeading>
          </OutlineBar>
        </OutlineRow>

        <Workspace>
          <ControlPanel>
            <ButtonRow>
              <PushButton>Undo</PushButton>
              <PushButton>Start Over</PushButton>
              <PushButton>Done</PushButton>
            </ButtonRow>
            <ColumnsCaption>
              <HotSpot label="Columns menu" />
              5 Columns
            </ColumnsCaption>
            <ColumnList aria-label="Columns">
              {columns.map(([name, kind]) => (
                <ColumnItem key={name}><ColumnIcon kind={kind} />{name}</ColumnItem>
              ))}
            </ColumnList>

            <Section title="Points" />
            <Fields>
              <SelectField id="summary" label="Summary Statistic" value="None" />
              <SelectField id="error" label="Error Interval" value="Auto" />
              <SelectField id="style" label="Interval Style" value="Error Bar" />
              <SelectField id="jitter" label="Jitter" value="Auto" h={20} />
              <Field $h={17}>
                <FieldLabel htmlFor="limit">Jitter Limit</FieldLabel>
                <Slider id="limit" type="range" min={0} max={100} defaultValue={50} />
              </Field>
              <VariablesField id="point-vars" h={19} />
            </Fields>

            <Section title="Box Plot" />
            <Fields>
              <SelectField id="box-jitter" label="Jitter" value="Auto" h={22} />
              <Field $h={22}>
                <FieldLabel htmlFor="outliers">Outliers</FieldLabel>
                <CheckBox id="outliers" type="checkbox" defaultChecked />
              </Field>
              <SelectField id="box-type" label="Box Type" value="Outlier" />
              <SelectField id="box-style" label="Box Style" value="Normal" h={23} />
              <Field $h={18}>
                <FieldLabel htmlFor="five">5 Number Summary</FieldLabel>
                <CheckBox id="five" type="checkbox" />
              </Field>
              <Field $h={18}>
                <FieldLabel htmlFor="width">Width Proportion</FieldLabel>
                <NumberBox id="width" type="text" defaultValue="0" />
              </Field>
              <VariablesField id="box-vars" h={18} />
            </Fields>
          </ControlPanel>

          <GraphPanel>
            <ElementBar>
              {elementGroups.map((group, i) => (
                <ElementGroup key={i}>
                  {group.map((el) => (
                    <ElementButton key={el.name} title={el.name} $on={el.on} disabled={el.off}>{el.glyph}</ElementButton>
                  ))}
                </ElementGroup>
              ))}
            </ElementBar>
            <GraphTitle>weight vs. sex</GraphTitle>
            <GraphGrid>
              <DropZone $size="group" $col={2}>Group X</DropZone>
              <DropZone $size="group" $col={3}>Wrap</DropZone>
              <RoleColumn>
                {["Overlay", "Color", "Size", "Interval"].map((role) => (
                  <DropZone key={role} $size="role">{role}</DropZone>
                ))}
                <Legend>
                  <LegendItem>
                    <svg width="13" height="13"><circle cx="6" cy="6.500" r="2.700" /></svg>
                    weight
                  </LegendItem>
                  <LegendItem>
                    <svg width="13" height="13"><path d="M1.500 4.500h10v5h-10zM6.500 1v3.500M6.500 9.500V13" fill="none" stroke="#000" /></svg>
                    weight
                  </LegendItem>
                </Legend>
              </RoleColumn>

              <YAxis>
                <YTitle>weight</YTitle>
                <AxisSvg aria-hidden="true">
                  {ticks.map((t) => (
                    <g key={t}>
                      <path d={`M26 ${Math.floor(toY(t)) + 0.5}h6`} stroke="#a0a0a0" />
                      <text x="24" y={Math.floor(toY(t)) + 5} textAnchor="end">{t}</text>
                    </g>
                  ))}
                </AxisSvg>
              </YAxis>
              <PlotFrame>
                <PlotSvg role="img" aria-label="Box plots of weight by sex">
                  {groups.map((g) => <BoxWithPoints key={g.at} g={g} />)}
                </PlotSvg>
              </PlotFrame>
              <DropZone $vertical>Group Y</DropZone>

              <DropZone $faint>Map<br />Shape</DropZone>
              <XAxis>
                <span>F</span>
                <span>M</span>
                <XTitle>sex</XTitle>
              </XAxis>
              <DropZone>Freq</DropZone>
              <DropZone>Page</DropZone>
            </GraphGrid>
          </GraphPanel>
        </Workspace>

        <StatusBar>
          <StatusTools>
            <StatusButton $w={15} aria-label="Home window">
              <svg width="12" height="12" viewBox="0 0 12 12"><path d="M2 6v5.500h8V6L6 2z" fill="#fdf3da" stroke="#5b7f95" /><path d="M.5 6.500 6 1l5.500 5.500" fill="none" stroke="#1f7fae" strokeWidth="1.600" /><path d="M5 7.500h2.500v4H5z" fill="#b87a25" /></svg>
            </StatusButton>
            <StatusButton $w={16} aria-label="Data table">
              <svg width="12" height="12" viewBox="0 0 12 12"><path d="M.5 1.500h11v9H.5z" fill="#fff" stroke="#2878b8" /><path d="M1 4h10M1 7h10M4 2v8M8 2v8" stroke="#8aaed8" /><path d="M6 4h2v2H6z" fill="#c2415d" /><path d="m7 11 4-4M7.500 7l3.500 4" stroke="#1b75bb" strokeWidth="1.500" /></svg>
            </StatusButton>
            <StatusCheck type="checkbox" aria-label="Select window" />
            <StatusButton $w={18} aria-label="Arrange menu">
              <svg width="8" height="6" viewBox="0 0 8 6"><path d="M0 0h8L4 6z" /></svg>
            </StatusButton>
          </StatusTools>
          <svg width="20" height="20" viewBox="2 0 20 20" aria-hidden="true">
            <path d="M10 18h2M14 18h2M18 18h2M14 14h2M18 14h2M18 10h2" stroke="#b3bccd" strokeWidth="2" />
          </svg>
        </StatusBar>
      </Window>
    </>
  );
}
